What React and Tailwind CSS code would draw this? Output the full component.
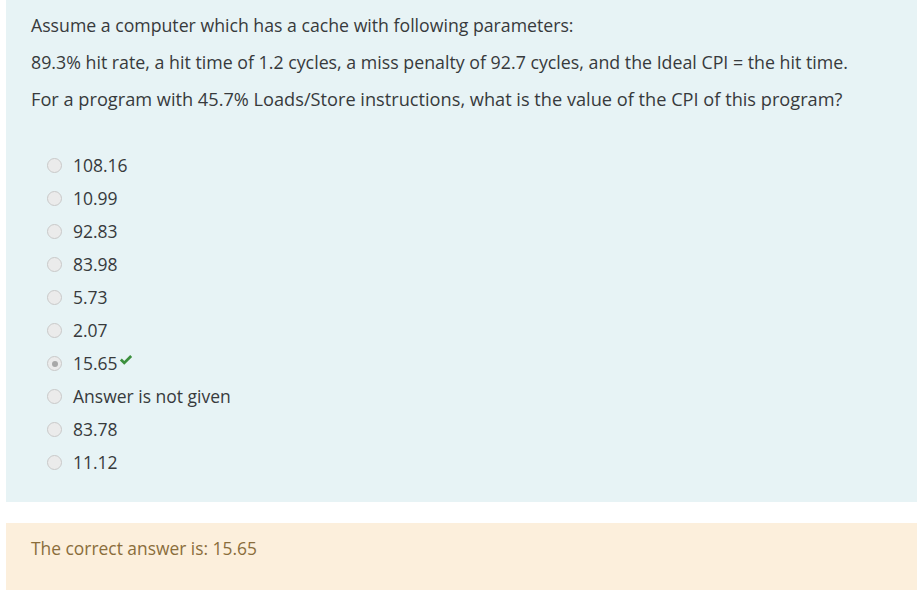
const options = ['108.16', '10.99', '92.83', '83.98', '5.73', '2.07', '15.65', 'Answer is not given', '83.78', '11.12']

function Radio({ checked }) {
  return (
    <span className="relative inline-flex h-[15px] w-[15px] shrink-0 items-center justify-center rounded-full border border-[#c9c9c9] bg-[#ebebeb]">
      {checked && <span className="h-[6px] w-[6px] rounded-full bg-[#a8a8a8]" />}
    </span>
  )
}

export default function App() {
  return (
    <div className="min-h-[590px] bg-white pl-[6px] text-[#373a3c]" style={{ fontFamily: '"Open Sans", "Noto Sans", sans-serif' }}>
      {/* Question */}
      <div className="bg-[#e7f3f5] pl-[25px] pr-2 pt-[13px] pb-[23px]">
        <p className="text-[17.7px] leading-[24px]">Assume a computer which has a cache with following parameters:</p>
        <p className="mt-[13px] text-[17.8px] leading-[24px]">89.3% hit rate, a hit time of 1.2 cycles, a miss penalty of 92.7 cycles, and the Ideal CPI = the hit time.</p>
        <p className="mt-[13px] text-[18.2px] leading-[24px]">For a program with 45.7% Loads/Store instructions, what is the value of the CPI of this program?</p>

        <div className="mt-[38px] flex flex-col">
          {options.map((o, i) => (
            <div key={i} className="flex h-[33px] items-center pl-[16px]">
              <Radio checked={o === '15.65'} />
              <span className="ml-[11px] text-[17.5px]">{o}</span>
              {o === '15.65' && (
                <svg viewBox="0 0 16 16" className="ml-[1px] -mt-[8px] h-[14px] w-[14px]" fill="#3b8f3c">
                  <path d="M1 8.5 L3.2 6.3 L6 9 L12.8 2.3 L15 4.5 L6 13.4 Z" />
                </svg>
              )}
            </div>
          ))}
        </div>
      </div>

      {/* Feedback */}
      <div className="mt-[21px] bg-[#fcefdc] px-[25px] pt-[13px] pb-[32px]">
        <p className="text-[17.4px] leading-[24px] text-[#8a6d3b]">The correct answer is: 15.65</p>
      </div>
    </div>
  )
}
